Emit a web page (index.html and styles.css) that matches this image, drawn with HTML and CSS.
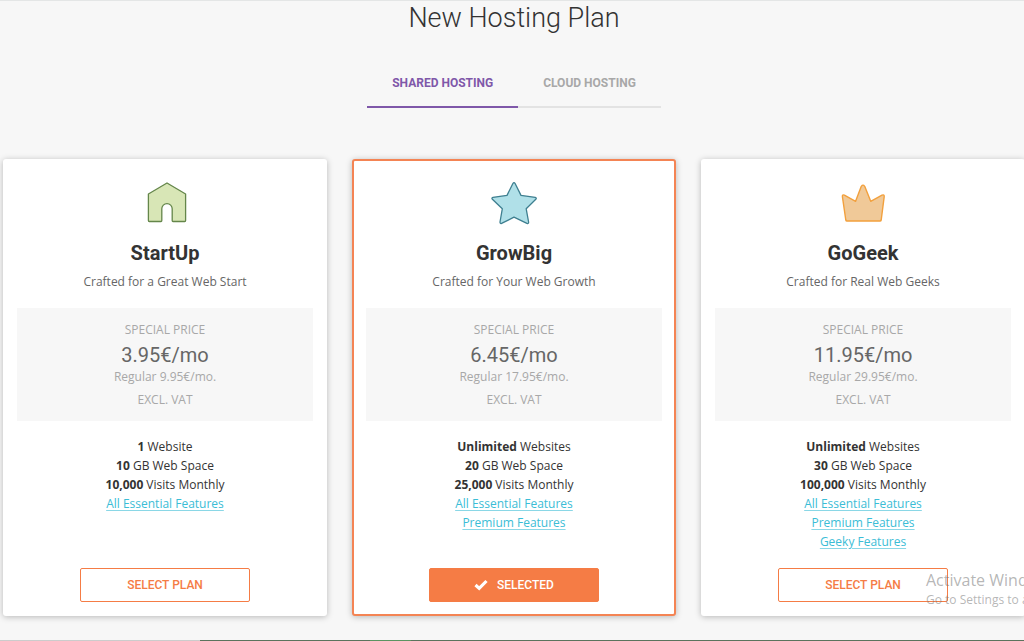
FILE: index.html
```html
<!DOCTYPE html>
<html lang="en">
<head>
<meta charset="utf-8">
<meta name="viewport" content="width=device-width, initial-scale=1">
<title>New Hosting Plan</title>
<link rel="stylesheet" href="styles.css">
</head>
<body>
<main class="page">
  <header class="header">
    <h1 class="title">New Hosting Plan</h1>
    <nav class="tabs" aria-label="Hosting type">
      <a class="tab tab-active" href="#shared" aria-current="page">SHARED HOSTING</a>
      <a class="tab" href="#cloud">CLOUD HOSTING</a>
    </nav>
  </header>
  <div class="plans">
    <section class="card">
      <svg class="icon" viewBox="0 0 60 60" aria-hidden="true"><path d="M32 11 L50.6 22 V48.6 Q50.6 49.5 49.7 49.5 H38 Q37.2 49.5 37.2 48.6 V36.8 A5.2 5.2 0 0 0 26.8 36.8 V48.6 Q26.8 49.5 26 49.5 H14.3 Q13.4 49.5 13.4 48.6 V22 Z" fill="#d8e6b6" stroke="#64864a" stroke-width="1.3" stroke-linejoin="round"/></svg>
      <h2 class="name">StartUp</h2>
      <p class="tagline">Crafted for a Great Web Start</p>
      <div class="pricing">
        <p class="note">SPECIAL PRICE</p>
        <p class="price">3.95€/mo</p>
        <p class="regular">Regular 9.95€/mo.</p>
        <p class="note">EXCL. VAT</p>
      </div>
      <ul class="features">
        <li><b>1</b> Website</li>
        <li><b>10</b> GB Web Space</li>
        <li><b>10,000</b> Visits Monthly</li>
        <li><a class="more" href="#essential">All Essential Features</a></li>
      </ul>
      <button class="button" type="button">SELECT PLAN</button>
    </section>
    <section class="card card-selected">
      <svg class="icon" viewBox="0 0 60 60" aria-hidden="true"><path d="M28.9 11.5 Q30 9.6 31.1 11.5 L37 23.4 L51.2 25.3 Q53 25.9 51.8 27.2 L42.2 36.8 L44.6 50 Q44.7 52 42.9 51.4 L30 45.2 L17.6 51.4 Q16 52 16 50 L18.3 36.8 L8.4 27.2 Q7.2 25.9 9 25.3 L23 23.4 Z" fill="#b0e0e8" stroke="#3e7f90" stroke-width="1.3" stroke-linejoin="round"/></svg>
      <h2 class="name">GrowBig</h2>
      <p class="tagline">Crafted for Your Web Growth</p>
      <div class="pricing">
        <p class="note">SPECIAL PRICE</p>
        <p class="price">6.45€/mo</p>
        <p class="regular">Regular 17.95€/mo.</p>
        <p class="note">EXCL. VAT</p>
      </div>
      <ul class="features">
        <li><b>Unlimited</b> Websites</li>
        <li><b>20</b> GB Web Space</li>
        <li><b>25,000</b> Visits Monthly</li>
        <li><a class="more" href="#essential">All Essential Features</a></li>
        <li><a class="more" href="#premium">Premium Features</a></li>
      </ul>
      <button class="button button-filled" type="button"><svg class="check" viewBox="0 0 14 12" aria-hidden="true"><path d="M1.5 6 L5.2 9.4 L12.5 2" fill="none" stroke="#fff" stroke-width="3.2"/></svg>SELECTED</button>
    </section>
    <section class="card">
      <svg class="icon" viewBox="0 0 60 60" aria-hidden="true"><path d="M28.3 14.3 Q30 12 31.7 14.3 L37.7 29.3 L49 23.2 Q51.4 22.2 51.2 24.6 L48.2 48 Q48 49 47 49 H14 Q13 49 12.8 48 L9.4 24.6 Q9.2 22.2 11.4 23.2 L22.6 29.3 Z" fill="#f0c998" stroke="#f2a03d" stroke-width="1.4" stroke-linejoin="round"/></svg>
      <h2 class="name">GoGeek</h2>
      <p class="tagline">Crafted for Real Web Geeks</p>
      <div class="pricing">
        <p class="note">SPECIAL PRICE</p>
        <p class="price">11.95€/mo</p>
        <p class="regular">Regular 29.95€/mo.</p>
        <p class="note">EXCL. VAT</p>
      </div>
      <ul class="features">
        <li><b>Unlimited</b> Websites</li>
        <li><b>30</b> GB Web Space</li>
        <li><b>100,000</b> Visits Monthly</li>
        <li><a class="more" href="#essential">All Essential Features</a></li>
        <li><a class="more" href="#premium">Premium Features</a></li>
        <li><a class="more" href="#geeky">Geeky Features</a></li>
      </ul>
      <button class="button" type="button">SELECT PLAN</button>
    </section>
  </div>
  <div class="strip"></div>
  <aside class="watermark">
    <p class="watermark-title">Activate Windows</p>
    <p class="watermark-text">Go to Settings to activate Windows.</p>
  </aside>
</main>
</body>
</html>
```
FILE: styles.css
```css
* { box-sizing: border-box; }
body, h1, h2, p, ul { margin: 0; padding: 0; }
body {
  background: #f7f7f7;
  font-family: "Open Sans", sans-serif;
  font-size: 12px;
  color: #333;
}
.page {
  position: relative;
  display: flex;
  flex-direction: column;
  min-height: 100vh;
  border-top: 1px solid #e4e6e6;
  overflow: hidden;
}
.header {
  display: flex;
  flex-direction: column;
  align-items: center;
  padding-left: 4px;
}
.title {
  font: 300 27px/34px Roboto, sans-serif;
}
.tabs {
  display: flex;
  margin-top: 23px;
}
.tab {
  padding: 17px 25px 15px;
  border-bottom: 2px solid #e3e3e3;
  font: 700 12px/16px Roboto, sans-serif;
  color: #a8a8a8;
  text-decoration: none;
}
.tab-active {
  border-color: #7f58a9;
  color: #7f58a9;
}
.plans {
  display: grid;
  grid-template-columns: repeat(3, 1fr);
  gap: 25px;
  margin: 51px -1px 0 3px;
}
.card {
  display: flex;
  flex-direction: column;
  align-items: center;
  min-height: 457px;
  padding: 13px 14px 14px;
  background: #fff;
  border-radius: 3px;
  box-shadow: 0 1px 6px rgba(0, 0, 0, 0.26);
  text-align: center;
}
.card-selected {
  padding: 11px 12px 12px;
  border: 2px solid #f48454;
}
.icon { width: 60px; height: 60px; }
.name {
  margin-top: 8px;
  font: 700 20px/26px Roboto, sans-serif;
}
.tagline {
  margin-top: 6px;
  line-height: 20px;
  color: #666;
}
.pricing {
  align-self: stretch;
  margin-top: 16px;
  padding: 12px 0 11px;
  background: #f7f7f7;
  color: #a8a8a8;
}
.note { line-height: 20px; }
.price {
  margin-top: 2px;
  font: 400 20px/26px Roboto, sans-serif;
  color: #666;
}
.regular { line-height: 18px; margin-bottom: 4px; }
.features {
  margin-top: 16px;
  list-style: none;
  line-height: 19px;
}
.more {
  color: #3bbdd6;
  text-decoration: underline 1px #8ad7e6;
  text-underline-offset: 2px;
}
.button {
  display: flex;
  align-items: center;
  justify-content: center;
  gap: 9px;
  width: 170px;
  height: 34px;
  margin-top: auto;
  border: 1px solid #f57c45;
  border-radius: 2px;
  background: #fff;
  font: 500 12px/16px Roboto, sans-serif;
  color: #f57c45;
}
.button-filled { background: #f57c45; color: #fff; }
.check { width: 14px; height: 12px; }
.strip {
  height: 1px;
  margin-top: auto;
  background: linear-gradient(to right, #ccc 200px, #5b735d 200px 370px, #5b9461 370px 411px, #5b735d 411px);
}
/* System notice floating over the page's bottom corner */
.watermark {
  position: absolute;
  left: calc(100% - 98px);
  bottom: 32px;
  color: rgba(120, 120, 120, 0.55);
  white-space: nowrap;
  pointer-events: none;
}
.watermark-title { font-size: 16px; line-height: 22px; }
.watermark-text { font-size: 12px; line-height: 18px; }
```
